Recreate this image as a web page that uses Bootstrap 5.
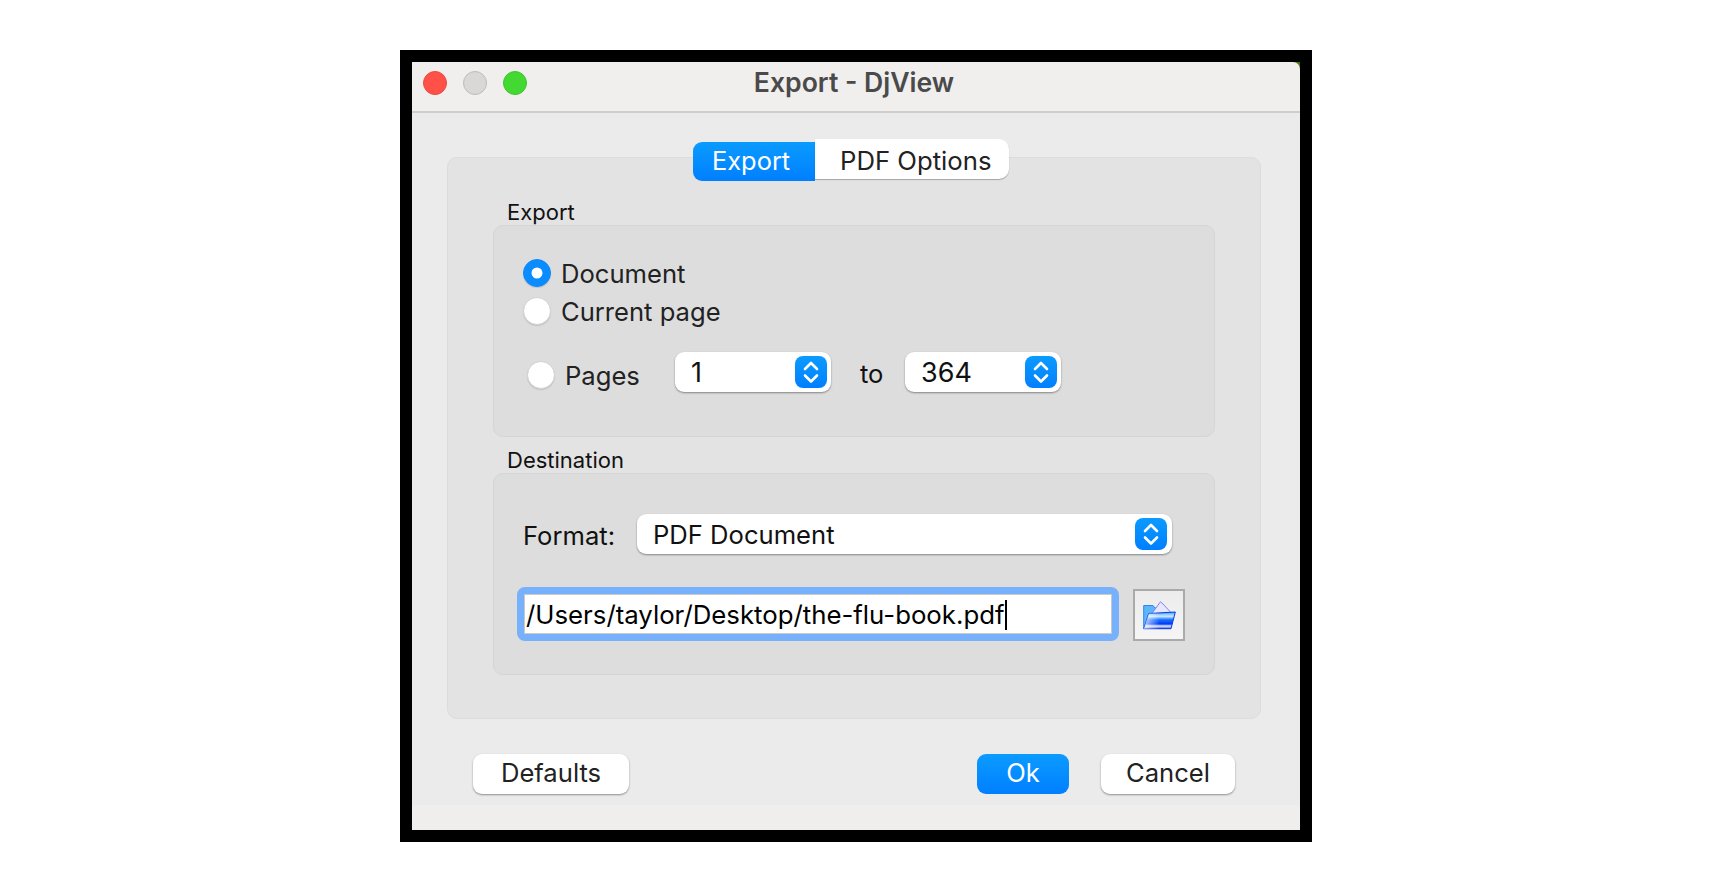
<!DOCTYPE html>
<html lang="en">
<head>
<meta charset="utf-8">
<title>Export - DjView</title>
<link href="https://cdn.jsdelivr.net/npm/bootstrap@5.3.0/dist/css/bootstrap.min.css" rel="stylesheet">
<style>
html,body{height:100%;background:#fff;overflow:hidden}
body{font-family:Inter,"Noto Sans",sans-serif;color:#222;font-size:25.6px}
.shot-frame{width:912px;height:792px;margin:50px auto 0;border:12px solid #000;background:#4f7a08}
.title-strip{height:51px;background:#f0efee;border-bottom:2px solid #cfcecd;border-top-right-radius:7px;position:relative}
.light{width:24px;height:24px;border-radius:50%;border:1px solid transparent}
.light-red{background:#ff5147;border-color:#e9493f}
.light-grey{background:#d9d8d7;border-color:#bdbcbb}
.light-green{background:#43d932;border-color:#3bc52b}
.lights{padding:9px 0 0 11px;gap:16px}
.title-text{font-size:26.6px;font-weight:600;color:#4a4a4a;line-height:50px;left:0;right:4px;top:-5px;position:absolute;text-align:center;pointer-events:none}
.dialog-body{height:692px;background:#ebebeb;padding:26px 39px 0 35px}
.tab-line{padding-left:246px;height:42px;margin-bottom:-24px;position:relative;z-index:2;align-items:flex-start}
.tab-a{height:39px;width:122px;margin-top:3px;background:linear-gradient(#0b9bff,#007fff);color:#fff;border-top-left-radius:9px;border-bottom-left-radius:9px;padding:0 0 0 19px;line-height:38px;font-size:25.4px}
.tab-b{height:40px;width:194px;background:#fff;color:#222;border-top-right-radius:10px;border-bottom-right-radius:10px;box-shadow:0 1px 1px rgba(0,0,0,.28);padding:0 0 0 25px;line-height:43px;font-size:25.7px}
.tab-a:hover,.tab-a:focus{color:#fff}.tab-b:hover,.tab-b:focus{color:#222}
.outer-panel{height:562px;background:#e3e3e3;border:1px solid #dcdcdc;border-radius:10px;padding:23px 45px 0 45px}
.grp-label{height:44px;margin:0;padding:16px 0 0 14px;font-size:22px;line-height:30px;color:#111}
.grp-box{background:#ddd;border:1px solid #d5d5d5;border-radius:10px}
.grp-one{height:212px;padding:28px 0 0 29px}
.grp-two{height:202px;padding:40px 0 0 0}
.lab-two{margin-top:-8px}
.form-check-input.rad{width:28px;height:28px;margin:0;background-color:#fff;border:1px solid #d2d2d2;box-shadow:0 1px 1px rgba(0,0,0,.12);flex:none}
.form-check-input.rad:checked{background-color:#0a8cff;border-color:#0a8cff;background-size:84%;background-position:center}
.rad-line{height:38px;gap:10px;color:#222;line-height:28px}
.rad-line span{margin-top:2px}
.rad-pages{margin-top:22px;margin-left:4px;height:40px;color:#222;line-height:40px}
.rad-pages .rad{margin-top:5px}
.pg-name{margin:7px 0 0 10px;width:110px}
.wbox{background:#fff;border-radius:9px;box-shadow:0 1px 2px rgba(0,0,0,.4);height:40px;color:#111;line-height:40px;padding:0 4px 0 16px}
.wbox span{margin-top:2px}
.wbox-sm{width:156px;font-size:27px}
.stepper{width:32px;height:32px;background:linear-gradient(#0b9bff,#007fff);border-radius:8px;flex:none;display:block}
.to-word{width:74px;text-align:left;padding-left:29px;color:#111;flex:none;margin-top:3px}
.fmt-line{padding-left:29px;height:40px;line-height:40px}
.fmt-name{width:114px;color:#111;margin-top:2px}
.wbox-lg{width:535px;padding-right:5px}
.path-line{margin-top:33px;padding-left:23px}
.path-ring{width:602px;height:54px;border:7px solid #78b1fb;border-radius:8px;background:#fff;padding:0 0 0 2px;color:#000;line-height:42px;font-size:25.78px;box-shadow:inset 0 0 0 1px #c9c9c9;white-space:nowrap}
.caret-bar{display:inline-block;width:2px;height:30px;background:#000;vertical-align:-6px;margin-left:1px}
.file-btn{width:52px;height:52px;margin:2px 0 0 14px;border:2px solid #aaa;background:linear-gradient(#ececec,#f5f5f5);border-radius:0;padding:0}
.foot-row{padding:35px 26px 0 26px}
.wbtn{height:40px;background:#fff;color:#222;border:0;border-radius:9px;box-shadow:0 1px 2px rgba(0,0,0,.4);font-size:25.6px;padding:0 0 2px;line-height:36px}
.wbtn:hover,.wbtn:active{background:#fff;color:#222}
.wbtn-def{width:156px}.wbtn-can{width:134px;margin-left:32px}
.wbtn-ok{width:92px;background:linear-gradient(#0b9bff,#007fff);color:#fff;box-shadow:none}
.wbtn-ok:hover{background:linear-gradient(#0b9bff,#007fff);color:#fff}
.foot-band{height:25px;background:#efeeec}
</style>
</head>
<body>
<div class="shot-frame">
  <div class="title-strip">
    <div class="d-flex lights"><span class="light light-red"></span><span class="light light-grey"></span><span class="light light-green"></span></div>
    <div class="title-text">Export - DjView</div>
  </div>
  <div class="dialog-body">
    <ul class="nav tab-line">
      <li class="nav-item"><a class="nav-link tab-a" href="#">Export</a></li>
      <li class="nav-item"><a class="nav-link tab-b" href="#">PDF Options</a></li>
    </ul>
    <div class="outer-panel">
      <div class="grp-label">Export</div>
      <div class="grp-box grp-one">
        <label class="d-flex align-items-center rad-line"><input class="form-check-input rad" type="radio" name="r" checked><span>Document</span></label>
        <label class="d-flex align-items-center rad-line"><input class="form-check-input rad" type="radio" name="r"><span>Current page</span></label>
        <div class="d-flex align-items-center rad-pages">
          <input class="form-check-input rad" type="radio" name="r">
          <span class="pg-name">Pages</span>
          <div class="wbox wbox-sm d-flex align-items-center justify-content-between"><span>1</span><svg class="stepper" viewBox="0 0 32 32"><path d="M10 13L16 7L22 13M10 19.5L16 25.5L22 19.5" fill="none" stroke="#fff" stroke-width="2.6" stroke-linecap="round" stroke-linejoin="round"/></svg></div>
          <span class="to-word">to</span>
          <div class="wbox wbox-sm d-flex align-items-center justify-content-between"><span>364</span><svg class="stepper" viewBox="0 0 32 32"><path d="M10 13L16 7L22 13M10 19.5L16 25.5L22 19.5" fill="none" stroke="#fff" stroke-width="2.6" stroke-linecap="round" stroke-linejoin="round"/></svg></div>
        </div>
      </div>
      <div class="grp-label lab-two">Destination</div>
      <div class="grp-box grp-two">
        <div class="d-flex align-items-start fmt-line">
          <span class="fmt-name">Format:</span>
          <div class="wbox wbox-lg d-flex align-items-center justify-content-between"><span>PDF Document</span><svg class="stepper" viewBox="0 0 32 32"><path d="M10 13L16 7L22 13M10 19.5L16 25.5L22 19.5" fill="none" stroke="#fff" stroke-width="2.6" stroke-linecap="round" stroke-linejoin="round"/></svg></div>
        </div>
        <div class="d-flex align-items-start path-line">
          <div class="path-ring">/Users/taylor/Desktop/the-flu-book.pdf<span class="caret-bar"></span></div>
          <button class="btn file-btn d-flex align-items-center justify-content-center" type="button" aria-label="Browse">
            <svg width="33" height="29" viewBox="0 0 33 29">
              <defs>
                <linearGradient id="fr" x1="0" y1="0" x2="0" y2="1"><stop offset="0" stop-color="#2fa8ff"/><stop offset=".26" stop-color="#cfe9ff"/><stop offset=".46" stop-color="#1a74ff"/><stop offset=".72" stop-color="#0038f5"/><stop offset=".84" stop-color="#e6ecff"/><stop offset="1" stop-color="#2a55ee"/></linearGradient>
                <linearGradient id="fr2" x1="0" y1="0" x2="1" y2="0"><stop offset="0" stop-color="#fff" stop-opacity=".75"/><stop offset=".5" stop-color="#fff" stop-opacity="0"/></linearGradient>
              </defs>
              <path d="M.7 4.5H10L12 7H18V27.5H.7Z" fill="#5cb6fa" stroke="#2f86f0"/>
              <path d="M7 15L17.5 .8L20 3L27.5 11V15Z" fill="#e9e7fb" stroke="#7f84f0"/>
              <path d="M5.7 12.5L32.3 11L28 27.7H.9Z" fill="url(#fr)" stroke="#0b38e4"/>
              <path d="M5.7 12.5L32.3 11L28 27.7H.9Z" fill="url(#fr2)"/>
            </svg>
          </button>
        </div>
      </div>
    </div>
    <div class="d-flex foot-row">
      <button class="btn wbtn wbtn-def" type="button">Defaults</button>
      <div class="ms-auto d-flex"><button class="btn wbtn wbtn-ok" type="button">Ok</button><button class="btn wbtn wbtn-can" type="button">Cancel</button></div>
    </div>
  </div>
  <div class="foot-band"></div>
</div>
<script src="https://cdn.jsdelivr.net/npm/bootstrap@5.3.0/dist/js/bootstrap.bundle.min.js"></script>
</body>
</html>
